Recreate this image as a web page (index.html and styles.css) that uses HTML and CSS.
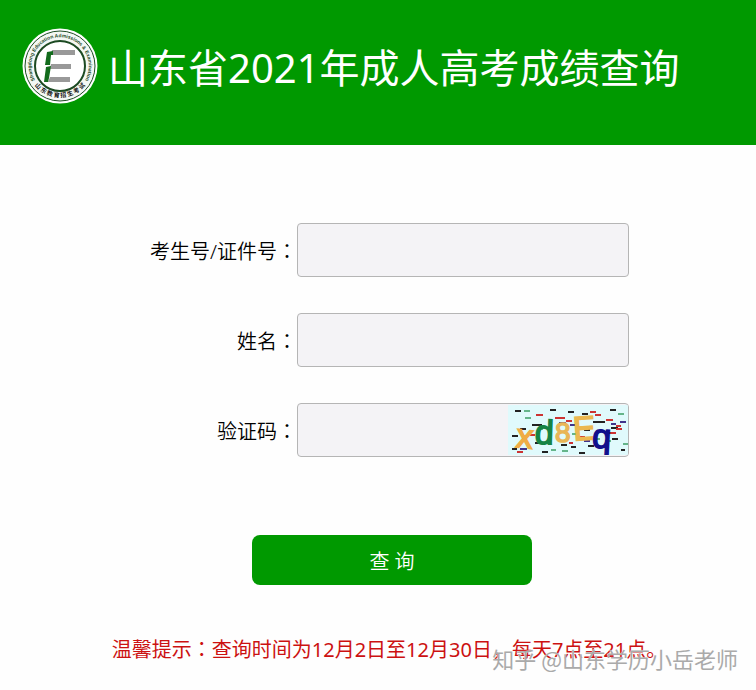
FILE: index.html
```html
<!DOCTYPE html>
<html lang="zh-CN">

<head>
    <meta charset="UTF-8">
    <meta name="viewport" content="width=device-width, initial-scale=1.0">
    <title>山东省2021年成人高考成绩查询</title>
    <link rel="stylesheet" href="styles.css">
</head>

<body>
    <header class="header">
        <svg class="logo" viewBox="0 0 76 76" aria-hidden="true">
            <defs>
                <path id="arc-top" d="M13.5 53 A28.7 28.7 0 1 1 62.5 53" />
                <path id="arc-bottom" d="M7 46.5 A32.4 32.4 0 0 0 69 46.5" />
            </defs>
            <circle cx="38" cy="38" r="37.5" fill="#fff" />
            <circle cx="38" cy="38" r="35" fill="#f4f8f4" stroke="#1c4a22" stroke-width="1" />
            <circle cx="38" cy="38" r="25" fill="#fff" stroke="#1c4a22" stroke-width="2" />
            <text class="logo-en"><textPath href="#arc-top" startOffset="50%" text-anchor="middle">Shangdong Education Admissions &amp; Examination</textPath></text>
            <text class="logo-cn"><textPath href="#arc-bottom" startOffset="50%" text-anchor="middle">山 东 教 育 招 生 考 试</textPath></text>
            <path d="M30 22h23v5H29zM29 36h20v5H28zM28 49h20v5H26z" fill="#999" />
            <path d="M25 24l6 -1v4h-2l-1 10h-5zM24 39l5 -1-2 12-1 4h-4z" fill="#126b1c" />
        </svg>
        <h1>山东省2021年成人高考成绩查询</h1>
    </header>

    <main>
        <form class="query-form" onsubmit="return false">
            <div class="row">
                <label for="number">考生号/证件号<span class="colon" lang="zh-TW">：</span></label>
                <div class="field"><input type="text" id="number"></div>
            </div>
            <div class="row">
                <label for="name">姓名<span class="colon" lang="zh-TW">：</span></label>
                <div class="field"><input type="text" id="name"></div>
            </div>
            <div class="row">
                <label for="code">验证码<span class="colon" lang="zh-TW">：</span></label>
                <div class="field">
                    <input type="text" id="code">
                    <svg class="captcha" viewBox="0 0 120 50">
                        <rect width="120" height="50" fill="#e0fafc" />
                        <g fill="none" stroke-width="2">
                            <path stroke="#222" d="M7 6h6M42 5h6M60 7h6M102 5h6M74 9h6M24 20h10M85 17h12M4 31h6M12 24h6M103 23h7M76 25h6M27 38h8M53 40h6M63 42h5M80 41h6M71 48h6M34 47h6M4 44h5M104 34h6M113 45h4" />
                            <path stroke="#c33" d="M28 10h7M82 7h6M87 10h6M47 13h10M58 16h6M98 15h7M108 24h6M100 28h8M70 32h7M22 30h5M9 47h6M61 38h4M108 21h5" />
                            <path stroke="#42358b" d="M51 18h7M112 17h6M62 20h5M14 34h5M103 19h5M76 36h6M12 44h7" />
                            <path stroke="#65b58a" d="M16 6h6M17 13h6M110 9h6M64 29h6M54 46h6M43 45h5M115 39h5M97 36h6M30 24h5M87 34h5" />
                        </g>
                        <g class="captcha-text">
                            <text x="8" y="43" fill="#f0ad45" stroke="#f0ad45" transform="rotate(6 17 35)">x</text>
                            <text x="27" y="39" fill="#168444" stroke="#168444" transform="rotate(2 36 27)">d</text>
                            <text class="small" x="47" y="37" fill="#e9b657" stroke="#e9b657">8</text>
                            <text x="65" y="35" fill="#ebb850" stroke="#ebb850" transform="rotate(-4 76 24)">E</text>
                            <text x="84" y="43" fill="#10108c" stroke="#10108c" transform="rotate(3 94 36)">q</text>
                        </g>
                    </svg>
                </div>
            </div>
            <button type="submit">查 询</button>
        </form>
        <p class="tip">温馨提示<span class="colon" lang="zh-TW">：</span>查询时间为12月2日至12月30日，每天7点至21点。</p>
    </main>

    <div class="watermark">知乎 @山东学历小岳老师</div>
</body>

</html>
```

FILE: styles.css
```css
body {
    font-family: "Noto Sans", "Noto Sans CJK SC", sans-serif;
    font-size: 20px;
    background-color: #fefefe;
    color: #000;
    margin: 0;
    position: relative;
}

.header {
    display: flex;
    align-items: center;
    gap: 10px;
    padding: 28px 22px 41px;
    background-color: #009900;
}

.logo {
    width: 76px;
    height: 76px;
    flex: none;
}

.logo-en {
    font: bold 5px "Liberation Sans", sans-serif;
    fill: #234a28;
}

.logo-cn {
    font: bold 6px "Noto Sans CJK SC", sans-serif;
    fill: #111;
}

h1 {
    margin: 0;
    padding-top: 4px;
    font-size: 40px;
    font-weight: 400;
    line-height: 60px;
    color: #fff;
}

main {
    display: flex;
    flex-direction: column;
    align-items: center;
    padding: 78px 0 26px 28px;
}

.query-form {
    display: flex;
    flex-direction: column;
    align-items: center;
}

.row {
    display: flex;
    align-items: center;
    margin-bottom: 36px;
    padding-right: 8px;
}

label {
    width: 150px;
    font-weight: 350;
    text-align: right;
    white-space: nowrap;
}

.colon {
    font-family: "Noto Sans CJK TC", sans-serif;
}

.field {
    display: flex;
    align-items: center;
    box-sizing: border-box;
    width: 332px;
    height: 54px;
    border: 1px solid #b5b5b5;
    border-radius: 4px;
    background-color: #f4f3f6;
    overflow: hidden;
}

.field input {
    flex: 1;
    min-width: 0;
    height: 100%;
    box-sizing: border-box;
    padding: 0 10px;
    border: none;
    outline: none;
    background: none;
    font: inherit;
}

.captcha {
    width: 120px;
    height: 50px;
    flex: none;
}

.captcha-text {
    font: 34px "Liberation Sans", sans-serif;
    stroke-width: 1.5px;
}

.captcha-text .small {
    font-size: 28px;
}

button {
    width: 280px;
    height: 50px;
    margin-top: 42px;
    border: none;
    border-radius: 8px;
    background-color: #009900;
    color: #fff;
    font: inherit;
    font-weight: 350;
    cursor: pointer;
}

.tip {
    margin: 50px 0 0;
    padding-right: 6px;
    line-height: 28px;
    color: #cc1111;
}

/* Sits over the end of the tip */
.watermark {
    position: absolute;
    right: 18px;
    bottom: 16px;
    font-family: "Noto Sans CJK SC", sans-serif;
    font-size: 22px;
    line-height: 32px;
    color: #aaa;
    text-shadow: 0 0 1px #fff;
}
```
